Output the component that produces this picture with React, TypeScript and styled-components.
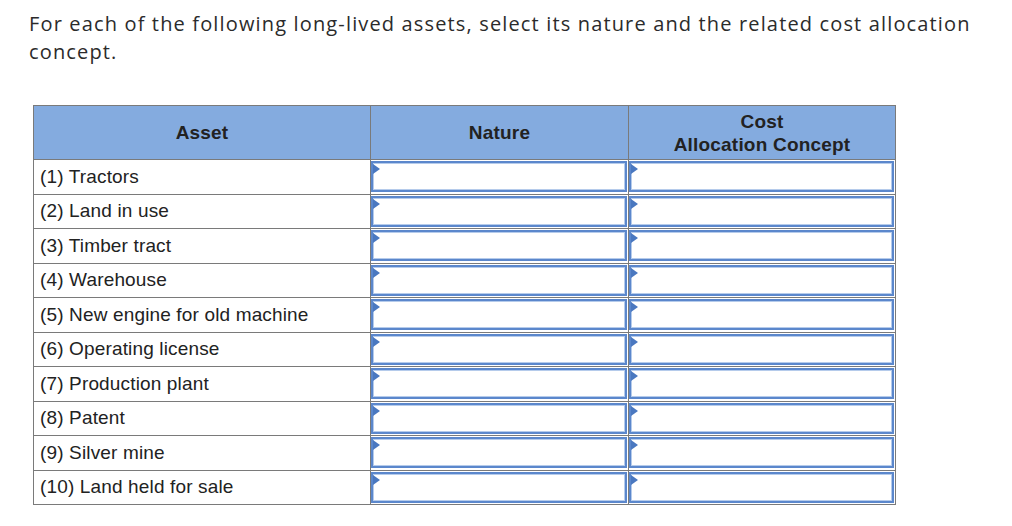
import React from 'react'
import styled, { createGlobalStyle } from 'styled-components'

const GlobalStyle = createGlobalStyle`
  body {
    margin: 0;
    background: #ffffff;
  }
`

const Page = styled.div`
  padding: 10px 0 0 29px;
`

const Prompt = styled.p`
  margin: 0;
  width: 960px;
  font-family: 'Open Sans', Lato, sans-serif;
  font-size: 20px;
  line-height: 28px;
  letter-spacing: 1.15px;
  color: #2b2b2b;
`

const Table = styled.table`
  margin: 39px 0 0 4px;
  border-collapse: collapse;
  font-family: 'Liberation Sans', Arial, sans-serif;
  color: #222;
  border: 1px solid #7a7a7a;
`

const HeadCell = styled.th<{ $w: number }>`
  width: ${(p) => p.$w}px;
  height: 53px;
  padding: 0;
  background: #84abdf;
  border: 1px solid #7a7a7a;
  font-size: 19px;
  font-weight: bold;
  line-height: 23px;
  letter-spacing: 0.2px;
  text-align: center;
`

const Row = styled.tr`
  height: 34.5px;
`

const AssetCell = styled.td`
  padding: 0 6px;
  border: 1px solid #7a7a7a;
  font-size: 19px;
  letter-spacing: 0.15px;
  white-space: nowrap;
`

const InputCell = styled.td`
  padding: 1px 1px 1px 0;
  border: 1px solid #7a7a7a;
`

const Dropdown = styled.div`
  position: relative;
  height: 27px;
  border: 2px solid #5b87cc;
  box-shadow: inset 0 0 0 1px #b5cbeb;
  background: #ffffff;
`

const Marker = styled.span`
  position: absolute;
  left: 0;
  top: 1px;
  width: 0;
  height: 0;
  border-top: 5px solid transparent;
  border-bottom: 5px solid transparent;
  border-left: 7px solid #4a78c0;
`

const assets = [
  '(1) Tractors',
  '(2) Land in use',
  '(3) Timber tract',
  '(4) Warehouse',
  '(5) New engine for old machine',
  '(6) Operating license',
  '(7) Production plant',
  '(8) Patent',
  '(9) Silver mine',
  '(10) Land held for sale',
]

export default function App() {
  return (
    <Page>
      <GlobalStyle />
      <Prompt>
        For each of the following long-lived assets, select its nature and the related cost allocation concept.
      </Prompt>
      <Table>
        <thead>
          <tr>
            <HeadCell $w={336}>Asset</HeadCell>
            <HeadCell $w={257}>Nature</HeadCell>
            <HeadCell $w={266}>
              Cost
              <br />
              Allocation Concept
            </HeadCell>
          </tr>
        </thead>
        <tbody>
          {assets.map((name) => (
            <Row key={name}>
              <AssetCell>{name}</AssetCell>
              <InputCell>
                <Dropdown>
                  <Marker />
                </Dropdown>
              </InputCell>
              <InputCell>
                <Dropdown>
                  <Marker />
                </Dropdown>
              </InputCell>
            </Row>
          ))}
        </tbody>
      </Table>
    </Page>
  )
}
